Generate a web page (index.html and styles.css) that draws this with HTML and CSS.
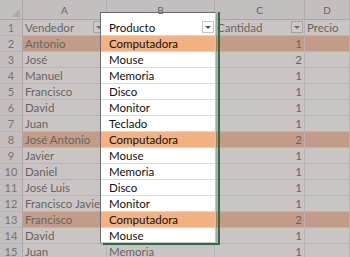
FILE: index.html
```html
<!DOCTYPE html>
<html lang="es">
<head>
<meta charset="utf-8">
<link rel="stylesheet" href="styles.css">
</head>
<body>
<div class="sheet">
  <div class="corner"><span class="tri"></span></div>
  <div class="ch">A</div><div class="ch">B</div><div class="ch">C</div><div class="ch">D</div>

  <div class="rh">1</div><div class="c flex"><span class="t">Vendedor</span><span class="dd"><svg width="10" height="10"><path d="M2 4h6l-3 3z"/></svg></span></div><div class="c">Producto</div><div class="c flex"><span class="t">Cantidad</span><span class="dd"><svg width="10" height="10"><path d="M2 4h6l-3 3z"/></svg></span></div><div class="c">Precio</div>
  <div class="rh">2</div><div class="c hl">Antonio</div><div class="c hl">Computadora</div><div class="c hl n">1</div><div class="c hl"></div>
  <div class="rh">3</div><div class="c">José</div><div class="c">Mouse</div><div class="c n">2</div><div class="c"></div>
  <div class="rh">4</div><div class="c">Manuel</div><div class="c">Memoria</div><div class="c n">1</div><div class="c"></div>
  <div class="rh">5</div><div class="c">Francisco</div><div class="c">Disco</div><div class="c n">1</div><div class="c"></div>
  <div class="rh">6</div><div class="c">David</div><div class="c">Monitor</div><div class="c n">1</div><div class="c"></div>
  <div class="rh">7</div><div class="c">Juan</div><div class="c">Teclado</div><div class="c n">1</div><div class="c"></div>
  <div class="rh">8</div><div class="c hl">José Antonio</div><div class="c hl">Computadora</div><div class="c hl n">2</div><div class="c hl"></div>
  <div class="rh">9</div><div class="c">Javier</div><div class="c">Mouse</div><div class="c n">1</div><div class="c"></div>
  <div class="rh">10</div><div class="c">Daniel</div><div class="c">Memoria</div><div class="c n">1</div><div class="c"></div>
  <div class="rh">11</div><div class="c">José Luis</div><div class="c">Disco</div><div class="c n">1</div><div class="c"></div>
  <div class="rh">12</div><div class="c">Francisco Javier</div><div class="c">Monitor</div><div class="c n">1</div><div class="c"></div>
  <div class="rh">13</div><div class="c hl">Francisco</div><div class="c hl">Computadora</div><div class="c hl n">2</div><div class="c hl"></div>
  <div class="rh">14</div><div class="c">David</div><div class="c">Mouse</div><div class="c n">1</div><div class="c"></div>
  <div class="rh">15</div><div class="c">Juan</div><div class="c">Memoria</div><div class="c n">1</div><div class="c"></div>
</div>

<div class="panel">
  <div class="pbody">
    <div class="strip"><div class="strip-in">B</div></div>
    <div class="prow flex"><span class="t">Producto</span><span class="dd pdd"><svg width="10" height="10"><path d="M2 4h6l-3 3z"/></svg></span></div>
    <div class="prow phl">Computadora</div>
    <div class="prow">Mouse</div>
    <div class="prow">Memoria</div>
    <div class="prow">Disco</div>
    <div class="prow">Monitor</div>
    <div class="prow">Teclado</div>
    <div class="prow phl">Computadora</div>
    <div class="prow">Mouse</div>
    <div class="prow">Memoria</div>
    <div class="prow">Disco</div>
    <div class="prow">Monitor</div>
    <div class="prow phl">Computadora</div>
    <div class="prow">Mouse</div>
  </div>
</div>
</body>
</html>
```
FILE: styles.css
```css
html, body {
  margin: 0;
  padding: 0;
  width: 350px;
  height: 257px;
  overflow: hidden;
  background: #c9c5c4;
  font-family: Lato, "Liberation Sans", sans-serif;
}

.sheet {
  display: grid;
  grid-template-columns: 23px 84px 108px 90px 1fr;
  grid-template-rows: 20px;
  grid-auto-rows: 16px;
  width: 350px;
}

.corner {
  background: #c3bfbe;
  border-right: 1px solid #aba6a5;
  border-bottom: 1px solid #aba6a5;
  position: relative;
}
.tri {
  position: absolute;
  left: 11px;
  top: 9px;
  width: 0;
  height: 0;
  border-left: 9px solid transparent;
  border-bottom: 8px solid #b0abaa;
}

.ch {
  background: #c3bfbe;
  border-right: 1px solid #b3aead;
  border-bottom: 1px solid #aba6a5;
  color: #6b6463;
  font-size: 10px;
  text-align: center;
  padding-top: 2px;
  line-height: 17px;
}

.rh {
  background: #c3bfbe;
  border-right: 1px solid #aba6a5;
  border-bottom: 1px solid #b8b3b2;
  color: #7a7372;
  font-size: 11px;
  line-height: 15px;
  text-align: center;
}

.c {
  border-right: 1px solid #b9b4b3;
  border-bottom: 1px solid #b9b4b3;
  color: #6b6362;
  font-size: 11.5px;
  line-height: 15px;
  padding-left: 2px;
  white-space: nowrap;
  overflow: hidden;
}
.c.n {
  text-align: right;
  padding-right: 2px;
}
.c.hl {
  background: #c39c89;
}

.flex {
  display: flex;
  align-items: flex-start;
}
.t {
  flex: 1;
}

.dd {
  width: 12px;
  height: 12px;
  box-sizing: border-box;
  margin: 1px 1px 0 0;
  border: 1px solid #a8a3a2;
  background: #cdc9c8;
  display: flex;
  align-items: center;
  justify-content: center;
  fill: #716a69;
}

.panel {
  position: absolute;
  left: 100px;
  top: 12px;
  width: 116px;
  height: 231px;
  box-sizing: border-box;
  border-left: 1px solid #6e6e6e;
  border-top: 1px solid #6e6e6e;
  border-right: 1px solid #c4c4c4;
  border-bottom: 1px solid #c4c4c4;
  background: #fff;
  box-shadow: 1px 1px 2px rgba(0, 0, 0, 0.25);
}
.panel::after {
  content: "";
  position: absolute;
  left: 2px;
  top: -1px;
  right: -5px;
  bottom: -3px;
  border-right: 2px solid #2e6f41;
  border-bottom: 2px solid #2e6f41;
  pointer-events: none;
}

.pbody {
  height: 100%;
  overflow: hidden;
}

.strip {
  height: 7px;
  overflow: hidden;
}
.strip-in {
  margin-top: -13px;
  padding-top: 2px;
  padding-left: 6px;
  line-height: 17px;
  font-size: 10px;
  text-align: center;
  color: #555;
}

.prow {
  height: 16px;
  box-sizing: border-box;
  border-bottom: 1px solid #d9d9d9;
  font-size: 11.5px;
  line-height: 15px;
  padding-left: 8px;
  color: #111;
  white-space: nowrap;
}
.prow.phl {
  background: #f4b183;
}
.pdd {
  border-color: #c6c6c6;
  background: #fff;
  fill: #555;
}
```
